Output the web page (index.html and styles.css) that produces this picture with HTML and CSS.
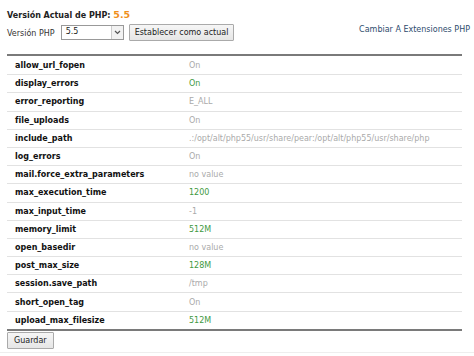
FILE: index.html
```html
<!DOCTYPE html>
<html lang="es">
<head>
<meta charset="utf-8">
<title>PHP</title>
<link rel="stylesheet" href="styles.css">
</head>
<body>
<div class="page">
  <div class="current">Versión Actual de PHP: <span class="ver">5.5</span></div>
  <div class="controls">
    <span class="label">Versión PHP</span>
    <div class="select"><span class="sel-val">5.5</span><span class="sel-arrow"><svg width="7" height="5" viewBox="0 0 7 5"><path d="M1 1 L3.5 3.5 L6 1" fill="none" stroke="#555" stroke-width="1.2"/></svg></span></div>
    <button class="btn">Establecer como actual</button>
    <a class="link" href="#">Cambiar A Extensiones PHP</a>
  </div>
  <table class="opts">
    <tbody>
      <tr><td class="k">allow_url_fopen</td><td class="v off">On</td></tr>
      <tr><td class="k">display_errors</td><td class="v on">On</td></tr>
      <tr><td class="k">error_reporting</td><td class="v off">E_ALL</td></tr>
      <tr><td class="k">file_uploads</td><td class="v off">On</td></tr>
      <tr><td class="k">include_path</td><td class="v off">.:/opt/alt/php55/usr/share/pear:/opt/alt/php55/usr/share/php</td></tr>
      <tr><td class="k">log_errors</td><td class="v off">On</td></tr>
      <tr><td class="k">mail.force_extra_parameters</td><td class="v off">no value</td></tr>
      <tr><td class="k">max_execution_time</td><td class="v on">1200</td></tr>
      <tr><td class="k">max_input_time</td><td class="v off">-1</td></tr>
      <tr><td class="k">memory_limit</td><td class="v on">512M</td></tr>
      <tr><td class="k">open_basedir</td><td class="v off">no value</td></tr>
      <tr><td class="k">post_max_size</td><td class="v on">128M</td></tr>
      <tr><td class="k">session.save_path</td><td class="v off">/tmp</td></tr>
      <tr><td class="k">short_open_tag</td><td class="v off">On</td></tr>
      <tr><td class="k">upload_max_filesize</td><td class="v on">512M</td></tr>
    </tbody>
  </table>
  <button class="btn save">Guardar</button>
</div>
<div class="next"></div>
</body>
</html>
```
FILE: styles.css
```css
html, body {
  margin: 0;
  padding: 0;
  background: #fff;
}
body {
  font-family: "DejaVu Sans", Verdana, sans-serif;
  font-size: 8px;
  color: #222;
}
.page {
  padding: 9px 4px 0 7px;
}
.current {
  font-weight: bold;
  font-size: 8px;
  line-height: 11px;
  color: #222;
}
.current .ver {
  color: #f0901c;
  font-size: 9.5px;
}
.controls {
  display: flex;
  align-items: center;
  margin-top: 2px;
  height: 18px;
}
.label {
  color: #333;
  margin-right: 6px;
  padding-top: 2px;
}
.select {
  display: flex;
  align-items: stretch;
  width: 63px;
  height: 15px;
  box-sizing: border-box;
  border: 1px solid #999;
  background: #fff;
}
.sel-val {
  flex: 1;
  padding-left: 4px;
  line-height: 12px;
  color: #222;
}
.sel-arrow {
  width: 11px;
  border-left: 1px solid #ccc;
  background: #f2f2f2;
  display: flex;
  align-items: center;
  justify-content: center;
}
.btn {
  font-family: "DejaVu Sans", Verdana, sans-serif;
  font-size: 8px;
  color: #222;
  background: linear-gradient(#f6f6f6, #e6e6e6);
  border: 1px solid #aaa;
  border-radius: 1px;
  padding: 0 5px;
  height: 17px;
  margin-left: 5px;
  cursor: pointer;
}
.link {
  margin-left: auto;
  color: #2e4c6e;
  text-decoration: none;
  margin-top: -5px;
}
.opts {
  width: 455px;
  margin-top: 13px;
  border-collapse: collapse;
  border-top: 2px solid #7a7a7a;
  border-bottom: 2px solid #7a7a7a;
}
.opts td {
  height: 17.2px;
  padding: 0;
  border-bottom: 1px solid #e2e2e2;
  vertical-align: middle;
}
.opts tr:first-child td {
  height: 18.2px;
}
.opts tr:last-child td {
  border-bottom: none;
}
.k {
  width: 174px;
  padding-left: 8px !important;
  font-weight: bold;
  color: #111;
}
.v {
  color: #aaa;
}
.v.on {
  color: #3f9a3f;
}
.save {
  margin: 1px 0 0 0;
  height: 17px;
  padding: 0 6px;
}
.next {
  margin-top: 3px;
  border-top: 1px solid #eee;
  height: 4px;
}
```
